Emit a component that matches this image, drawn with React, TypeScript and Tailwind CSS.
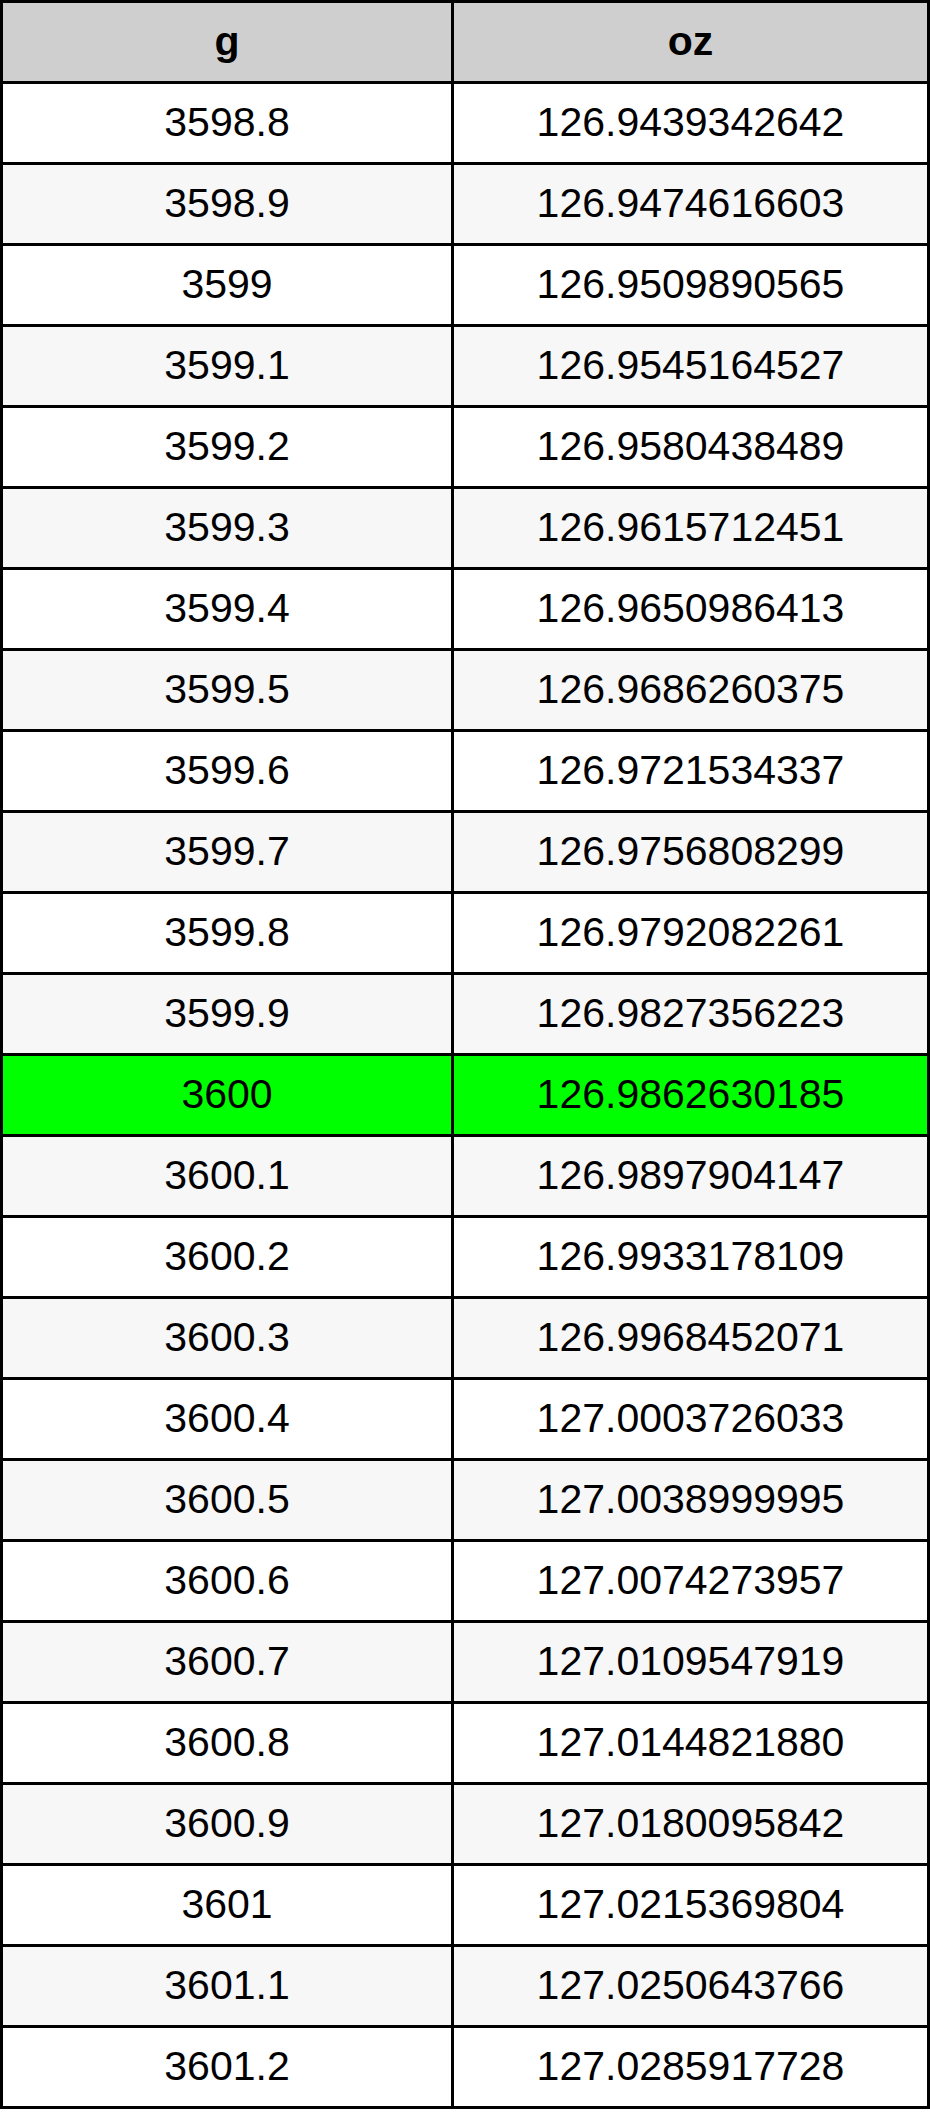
import React from "react";

const rows: [string, string][] = [
  ["3598.8", "126.9439342642"],
  ["3598.9", "126.9474616603"],
  ["3599", "126.9509890565"],
  ["3599.1", "126.9545164527"],
  ["3599.2", "126.9580438489"],
  ["3599.3", "126.9615712451"],
  ["3599.4", "126.9650986413"],
  ["3599.5", "126.9686260375"],
  ["3599.6", "126.9721534337"],
  ["3599.7", "126.9756808299"],
  ["3599.8", "126.9792082261"],
  ["3599.9", "126.9827356223"],
  ["3600", "126.9862630185"],
  ["3600.1", "126.9897904147"],
  ["3600.2", "126.9933178109"],
  ["3600.3", "126.9968452071"],
  ["3600.4", "127.0003726033"],
  ["3600.5", "127.0038999995"],
  ["3600.6", "127.0074273957"],
  ["3600.7", "127.0109547919"],
  ["3600.8", "127.0144821880"],
  ["3600.9", "127.0180095842"],
  ["3601", "127.0215369804"],
  ["3601.1", "127.0250643766"],
  ["3601.2", "127.0285917728"],
];

export default function App() {
  return (
    <div className="w-[930px] bg-white font-['Liberation_Sans',Arial,sans-serif] text-black">
      <div className="border-[3px] border-black">
        <div className="flex h-[78px] bg-[#cfcfcf] text-[41px] font-bold">
          <div className="flex w-[451px] items-center justify-center border-r-[3px] border-black">g</div>
          <div className="flex w-[473px] items-center justify-center">oz</div>
        </div>
        {rows.map(([g, oz], i) => {
          const bg =
            g === "3600" ? "bg-[#00ff00]" : i % 2 === 1 ? "bg-[#f7f7f7]" : "bg-white";
          return (
            <div
              key={g}
              className={`flex h-[81px] border-t-[3px] border-black text-[41px] ${bg}`}
            >
              <div className="flex w-[451px] items-center justify-center border-r-[3px] border-black">
                {g}
              </div>
              <div className="flex w-[473px] items-center justify-center">{oz}</div>
            </div>
          );
        })}
      </div>
    </div>
  );
}
